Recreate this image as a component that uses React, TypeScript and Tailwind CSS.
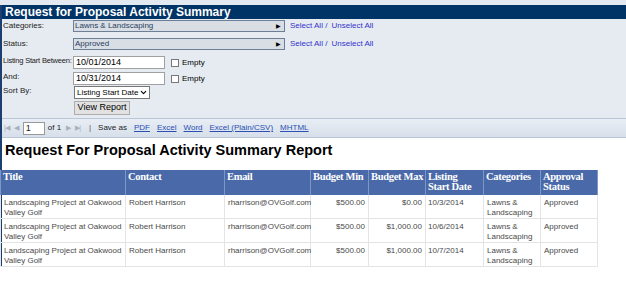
import { ChevronDown } from "lucide-react";

const rows = [
  { budgetMax: "$0.00", date: "10/3/2014" },
  { budgetMax: "$1,000.00", date: "10/6/2014" },
  { budgetMax: "$1,000.00", date: "10/7/2014" },
];

const cols = [
  { label: ["Title"], w: "w-[125px]" },
  { label: ["Contact"], w: "w-[99px]" },
  { label: ["Email"], w: "w-[86px]" },
  { label: ["Budget Min"], w: "w-[58px]" },
  { label: ["Budget Max"], w: "w-[57px]" },
  { label: ["Listing", "Start Date"], w: "w-[58px]" },
  { label: ["Categories"], w: "w-[57px]" },
  { label: ["Approval", "Status"], w: "w-[57px]" },
];

function MultiSelect({ value }: { value: string }) {
  return (
    <div className="flex items-center gap-[5px]">
      <div className="w-[212px] h-[12px] bg-[#d9dee5] border border-[#6d7f96] flex items-center justify-between pl-[1px] pr-[3px] text-[8px] text-[#2a3f63] leading-none">
        <span>{value}</span>
        <span className="text-[6px] text-black">▶</span>
      </div>
      <div className="text-[8px] text-[#3333cc] leading-none whitespace-nowrap">
        Select All / <span className="ml-[2px]">Unselect All</span>
      </div>
    </div>
  );
}

function DateInput({ value }: { value: string }) {
  return (
    <div className="flex items-center">
      <div className="w-[92px] h-[13px] bg-white border border-[#a0a0a0] text-[9px] text-black leading-none flex items-center pl-[2px]">
        {value}
      </div>
      <div className="ml-[6px] w-[8px] h-[8px] bg-white border border-[#777]" />
      <span className="ml-[3px] text-[8px] text-black">Empty</span>
    </div>
  );
}

export default function App() {
  return (
    <div className="w-[626px] h-[283px] bg-white overflow-hidden font-['Liberation_Sans',Arial,sans-serif]">
      <div className="h-[5px] bg-[#e3e9f0]" />
      <div className="border-l-2 border-[#1c3f73]">
        {/* header */}
        <div className="h-[14px] bg-[#003366] text-white font-bold text-[12px] leading-[14px] pl-[3px]">
          Request for Proposal Activity Summary
        </div>

        {/* parameters */}
        <div className="h-[99px] bg-[#e6ebf1] pt-[1px] text-[8px] text-[#222] whitespace-nowrap">
          <div className="flex items-center h-[12px]">
            <span className="w-[71px] pl-[1px]">Categories:</span>
            <MultiSelect value="Lawns & Landscaping" />
          </div>
          <div className="flex items-center h-[12px] mt-[6px]">
            <span className="w-[71px] pl-[1px]">Status:</span>
            <MultiSelect value="Approved" />
          </div>
          <div className="flex items-center h-[13px] mt-[6px]">
            <span className="w-[71px] pl-[1px] self-start leading-[9px] text-[7.5px] tracking-[-0.2px]">Listing Start Between:</span>
            <DateInput value="10/01/2014" />
          </div>
          <div className="flex items-center h-[13px] mt-[3px]">
            <span className="w-[71px] pl-[1px] self-start leading-[9px]">And:</span>
            <DateInput value="10/31/2014" />
          </div>
          <div className="flex items-start h-[13px] mt-[1px]">
            <span className="w-[72px] pl-[1px] leading-[9px]">Sort By:</span>
            <div className="w-[76px] h-[13px] bg-white border border-[#777] flex items-center justify-between pl-[2px] pr-[1px] text-[8px] text-black leading-none">
              <span>Listing Start Date</span>
              <ChevronDown size={9} strokeWidth={3} />
            </div>
          </div>
          <div className="ml-[72px] mt-[2px] w-[56px] h-[14px] bg-[#e1e1e1] border border-[#adadad] flex items-center justify-center text-[9px] text-black">
            View Report
          </div>
        </div>

        {/* toolbar */}
        <div className="h-[20px] bg-gradient-to-b from-[#e9eef5] to-[#d6dfea] border-y border-[#b8c6d8] flex items-center text-[8px] text-[#222] pl-[2px] whitespace-nowrap">
          <span className="text-[#a8b0bb] text-[7px] tracking-[-1px]">|◀</span>
          <span className="ml-[5px] text-[#a8b0bb] text-[7px]">◀</span>
          <div className="ml-[4px] w-[22px] h-[13px] bg-white border border-[#999] text-[9px] leading-none flex items-center pl-[2px]">
            1
          </div>
          <span className="ml-[3px]">of 1</span>
          <span className="ml-[5px] text-[#a8b0bb] text-[7px]">▶</span>
          <span className="ml-[4px] text-[#a8b0bb] text-[7px] tracking-[-1px]">▶|</span>
          <span className="ml-[9px] text-[#555]">|</span>
          <span className="ml-[7px]">Save as</span>
          <div className="ml-[7px] flex gap-[7px] text-[#2b4fb3] underline">
            <span>PDF</span>
            <span>Excel</span>
            <span>Word</span>
            <span>Excel (Plain/CSV)</span>
            <span>MHTML</span>
          </div>
        </div>

        {/* report */}
        <div className="pt-[4px]">
          <h1 className="pl-[3px] font-bold text-[14.5px] leading-[17px] text-black">
            Request For Proposal Activity Summary Report
          </h1>
          <table className="mt-[11px] border-collapse table-fixed w-[597px] -ml-[2px]">
            <thead>
              <tr className="bg-[#4a69a8] h-[25px]">
                {cols.map((c) => (
                  <th
                    key={c.label.join(" ")}
                    className={`${c.w} whitespace-nowrap text-left align-top pt-[2px] pl-[2px] pr-[1px] border-x border-[#7d96c4] text-white font-bold text-[10.5px] leading-[10px] tracking-[-0.3px] font-['Liberation_Serif',serif]`}
                  >
                    {c.label.map((l, i) => (
                      <div key={i}>{l}</div>
                    ))}
                  </th>
                ))}
              </tr>
            </thead>
            <tbody className="text-[8px] text-[#4a4a4a] leading-[10px]">
              {rows.map((r, i) => (
                <tr key={i} className="h-[23px] border-b border-[#e4e4e4]">
                  <td className="align-top pt-[3px] pl-[3px] border-x border-[#e4e4e4]">
                    Landscaping Project at Oakwood Valley Golf
                  </td>
                  <td className="align-top pt-[3px] pl-[3px] border-x border-[#e4e4e4]">Robert Harrison</td>
                  <td className="align-top pt-[3px] pl-[3px] border-x border-[#e4e4e4]">rharrison@OVGolf.com</td>
                  <td className="align-top pt-[3px] pr-[3px] text-right border-x border-[#e4e4e4]">$500.00</td>
                  <td className="align-top pt-[3px] pr-[3px] text-right border-x border-[#e4e4e4]">{r.budgetMax}</td>
                  <td className="align-top pt-[3px] pl-[2px] border-x border-[#e4e4e4]">{r.date}</td>
                  <td className="align-top pt-[3px] pl-[3px] border-x border-[#e4e4e4]">
                    Lawns &amp;
                    <br />
                    Landscaping
                  </td>
                  <td className="align-top pt-[3px] pl-[3px] border-x border-[#e4e4e4]">Approved</td>
                </tr>
              ))}
            </tbody>
          </table>
        </div>
      </div>
    </div>
  );
}
